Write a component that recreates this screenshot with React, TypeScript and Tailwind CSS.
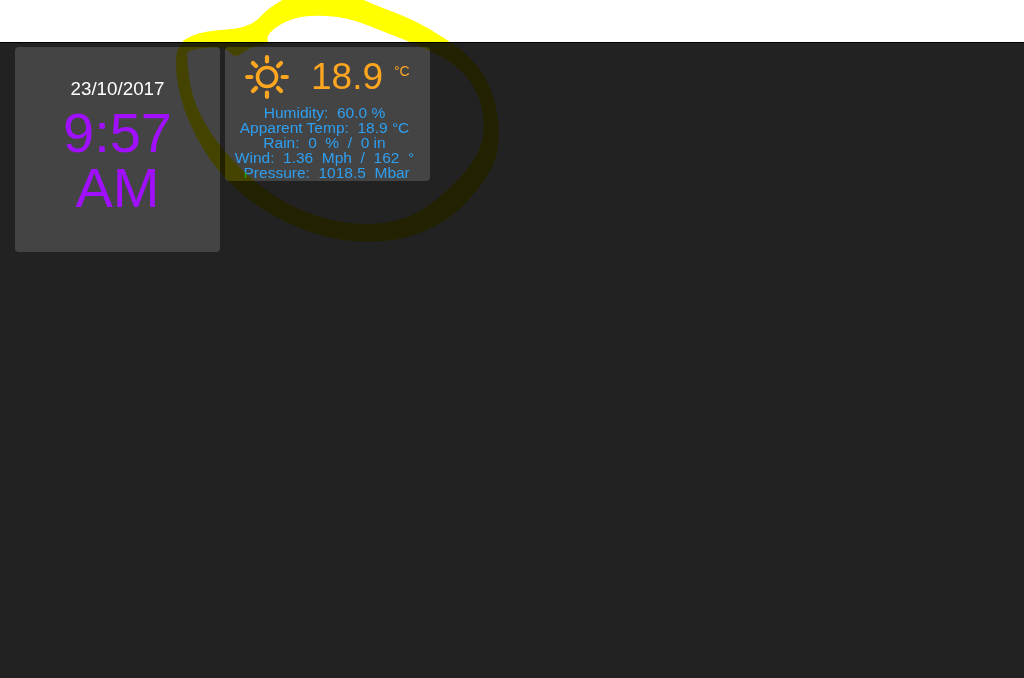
const details = [
  'Humidity:  60.0 %',
  'Apparent Temp:  18.9 °C',
  'Rain:  0  %  /  0 in',
  'Wind:  1.36  Mph  /  162  °',
  ' Pressure:  1018.5  Mbar',
]

const rays = [0, 45, 90, 135, 180, 225, 270, 315]

// outline of the marker stroke, traced from the picture
const outer = [
  [183, 42], [183, 40], [203, 31], [250, 28], [268, 8], [297, -8], [347, -8], [372, 4], [412, 19], [445, 38], [472, 58],
  [492, 88], [500, 127], [497, 159], [482, 185], [455, 215], [419, 235], [377, 243], [330, 239], [283, 222],
  [241, 195], [208, 159], [185, 115], [176, 77], [176, 50],
]
const inner = [
  [187, 50], [225, 46], [235, 59], [250, 47], [268, 44], [268, 44], [267, 34], [285, 21], [308, 15], [347, 17], [387, 33],
  [423, 47], [457, 65], [478, 91], [485, 123], [481, 150], [461, 178], [431, 205], [403, 220], [370, 225],
  [330, 221], [287, 205], [249, 178], [215, 141], [195, 105], [189, 80], [187, 57],
]

function smooth(pts: number[][]) {
  const mid = (a: number[], b: number[]) => `${(a[0] + b[0]) / 2} ${(a[1] + b[1]) / 2}`
  let d = `M ${mid(pts[pts.length - 1], pts[0])}`
  pts.forEach((p, i) => {
    d += ` Q ${p[0]} ${p[1]} ${mid(p, pts[(i + 1) % pts.length])}`
  })
  return d + ' Z'
}

function SunIcon() {
  return (
    <svg width="46" height="46" viewBox="0 0 46 46" fill="none" stroke="#ffa620" strokeLinecap="round">
      <circle cx="23" cy="23" r="9.5" strokeWidth="3.6" />
      {rays.map((r) => (
        <line key={r} x1="23" y1="3.2" x2="23" y2="7.4" strokeWidth="4.2" transform={`rotate(${r} 23 23)`} />
      ))}
    </svg>
  )
}

export default function App() {
  return (
    <div className="relative h-[678px] w-[1024px] overflow-hidden bg-[#222222] font-['Liberation_Sans',Arial,sans-serif]">
      <div className="h-[43px] border-b border-black bg-white" />

      <div className="flex items-start gap-[5px] pl-[15px] pt-[4px]">
        {/* Clock */}
        <div className="flex h-[205px] w-[205px] flex-col items-center rounded-[4px] bg-[#444444] pt-[31px]">
          <div className="text-[18.8px] leading-[22px] text-white">23/10/2017</div>
          <div className="mt-[5px] text-center text-[56px] leading-[55px] text-[#a010ff]">
            9:57
            <br />
            AM
          </div>
        </div>

        {/* Weather */}
        <div className="h-[134px] w-[205px] rounded-[4px] bg-[#444444]">
          <div className="flex h-[58px] items-start pl-[19px] pt-[7px]">
            <SunIcon />
            <div className="ml-[21px] mt-[1px] text-[37px] leading-[44px] text-[#ffa620]">18.9</div>
            <div className="ml-[11px] mt-[10px] text-[14px] leading-[14px] text-[#ffa620]">°C</div>
          </div>
          <div className="pr-[6px] text-center text-[15.5px] leading-[15px] whitespace-pre text-[#2f9ff0]">
            {details.map((d) => (
              <div key={d}>{d}</div>
            ))}
          </div>
        </div>
      </div>

      {/* Highlighter scribble */}
      <svg
        className="pointer-events-none absolute left-0 top-0 mix-blend-multiply"
        width="1024"
        height="678"
        viewBox="0 0 1024 678"
      >
        <path d={`${smooth(outer)} ${smooth(inner)}`} fill="#ffff00" fillRule="evenodd" />
      </svg>
    </div>
  )
}
